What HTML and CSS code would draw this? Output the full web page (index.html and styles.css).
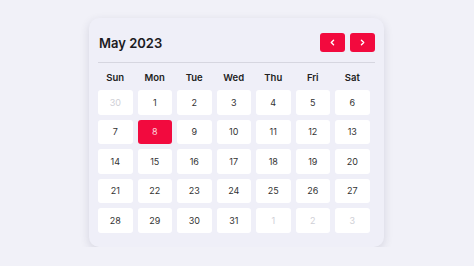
FILE: index.html
```html
<!DOCTYPE html>
<html lang="en">
<head>
  <meta charset="UTF-8" />
  <meta name="viewport" content="width=device-width, initial-scale=1.0" />
  <title>Calendar</title>
  <link rel="stylesheet" href="styles.css">
</head>
<body>
  <div class="calendar">
    <div class="cal-header">
      <h1>May 2023</h1>
      <div class="nav">
        <button class="nav-btn">
          <svg width="7" height="7" viewBox="0 0 8 8"><path d="M5.2 1.5 L2.6 4 L5.2 6.5" fill="none" stroke="#fff" stroke-width="1.6" stroke-linecap="round" stroke-linejoin="round"/></svg>
        </button>
        <button class="nav-btn">
          <svg width="7" height="7" viewBox="0 0 8 8"><path d="M2.8 1.5 L5.4 4 L2.8 6.5" fill="none" stroke="#fff" stroke-width="1.6" stroke-linecap="round" stroke-linejoin="round"/></svg>
        </button>
      </div>
    </div>

    <div class="weekdays">
      <div>Sun</div><div>Mon</div><div>Tue</div><div>Wed</div><div>Thu</div><div>Fri</div><div>Sat</div>
    </div>

    <div class="days">
      <div class="day muted">30</div>
      <div class="day">1</div>
      <div class="day">2</div>
      <div class="day">3</div>
      <div class="day">4</div>
      <div class="day">5</div>
      <div class="day">6</div>
      <div class="day">7</div>
      <div class="day active">8</div>
      <div class="day">9</div>
      <div class="day">10</div>
      <div class="day">11</div>
      <div class="day">12</div>
      <div class="day">13</div>
      <div class="day">14</div>
      <div class="day">15</div>
      <div class="day">16</div>
      <div class="day">17</div>
      <div class="day">18</div>
      <div class="day">19</div>
      <div class="day">20</div>
      <div class="day">21</div>
      <div class="day">22</div>
      <div class="day">23</div>
      <div class="day">24</div>
      <div class="day">25</div>
      <div class="day">26</div>
      <div class="day">27</div>
      <div class="day">28</div>
      <div class="day">29</div>
      <div class="day">30</div>
      <div class="day">31</div>
      <div class="day muted">1</div>
      <div class="day muted">2</div>
      <div class="day muted">3</div>
    </div>
  </div>
</body>
</html>
```

FILE: styles.css
```css
body {
  margin: 0;
  padding-top: 18px;
  background-color: #f1f1f8;
  font-family: 'Inter', 'Noto Sans', sans-serif;
  color: #222;
}

.calendar {
  width: 295px;
  height: 229px;
  box-sizing: border-box;
  margin-left: 89px;
  padding: 15px 9px 0 9px;
  background: #efeff8;
  border-radius: 10px;
  box-shadow: 0 3px 10px rgba(40, 40, 80, 0.14);
}

.cal-header {
  display: flex;
  justify-content: space-between;
  align-items: center;
  height: 19px;
  padding-left: 1px;
  padding-bottom: 10px;
  border-bottom: 1.5px solid #d6d6e0;
}

h1 {
  margin: 0;
  font-size: 13px;
  font-weight: 600;
  color: #1b1b22;
}

.nav {
  display: flex;
  gap: 5px;
}

.nav-btn {
  width: 25px;
  height: 19px;
  padding: 0;
  border: none;
  border-radius: 3px;
  background: #f20a3e;
  display: flex;
  align-items: center;
  justify-content: center;
}

.weekdays {
  display: grid;
  grid-template-columns: repeat(7, 34.5px);
  column-gap: 5px;
  margin-top: 9px;
  font-size: 9.5px;
  font-weight: 600;
  line-height: 12px;
  text-align: center;
  color: #222;
}

.days {
  display: grid;
  grid-template-columns: repeat(7, 34.5px);
  grid-auto-rows: 24.5px;
  gap: 5px;
  margin-top: 6px;
}

.day {
  background: #fff;
  border-radius: 3px;
  display: flex;
  align-items: center;
  justify-content: center;
  font-size: 9px;
  color: #333;
}

.day.muted {
  color: #cfcfd6;
}

.day.active {
  background: #f20a3e;
  color: #ffd6de;
}
```
